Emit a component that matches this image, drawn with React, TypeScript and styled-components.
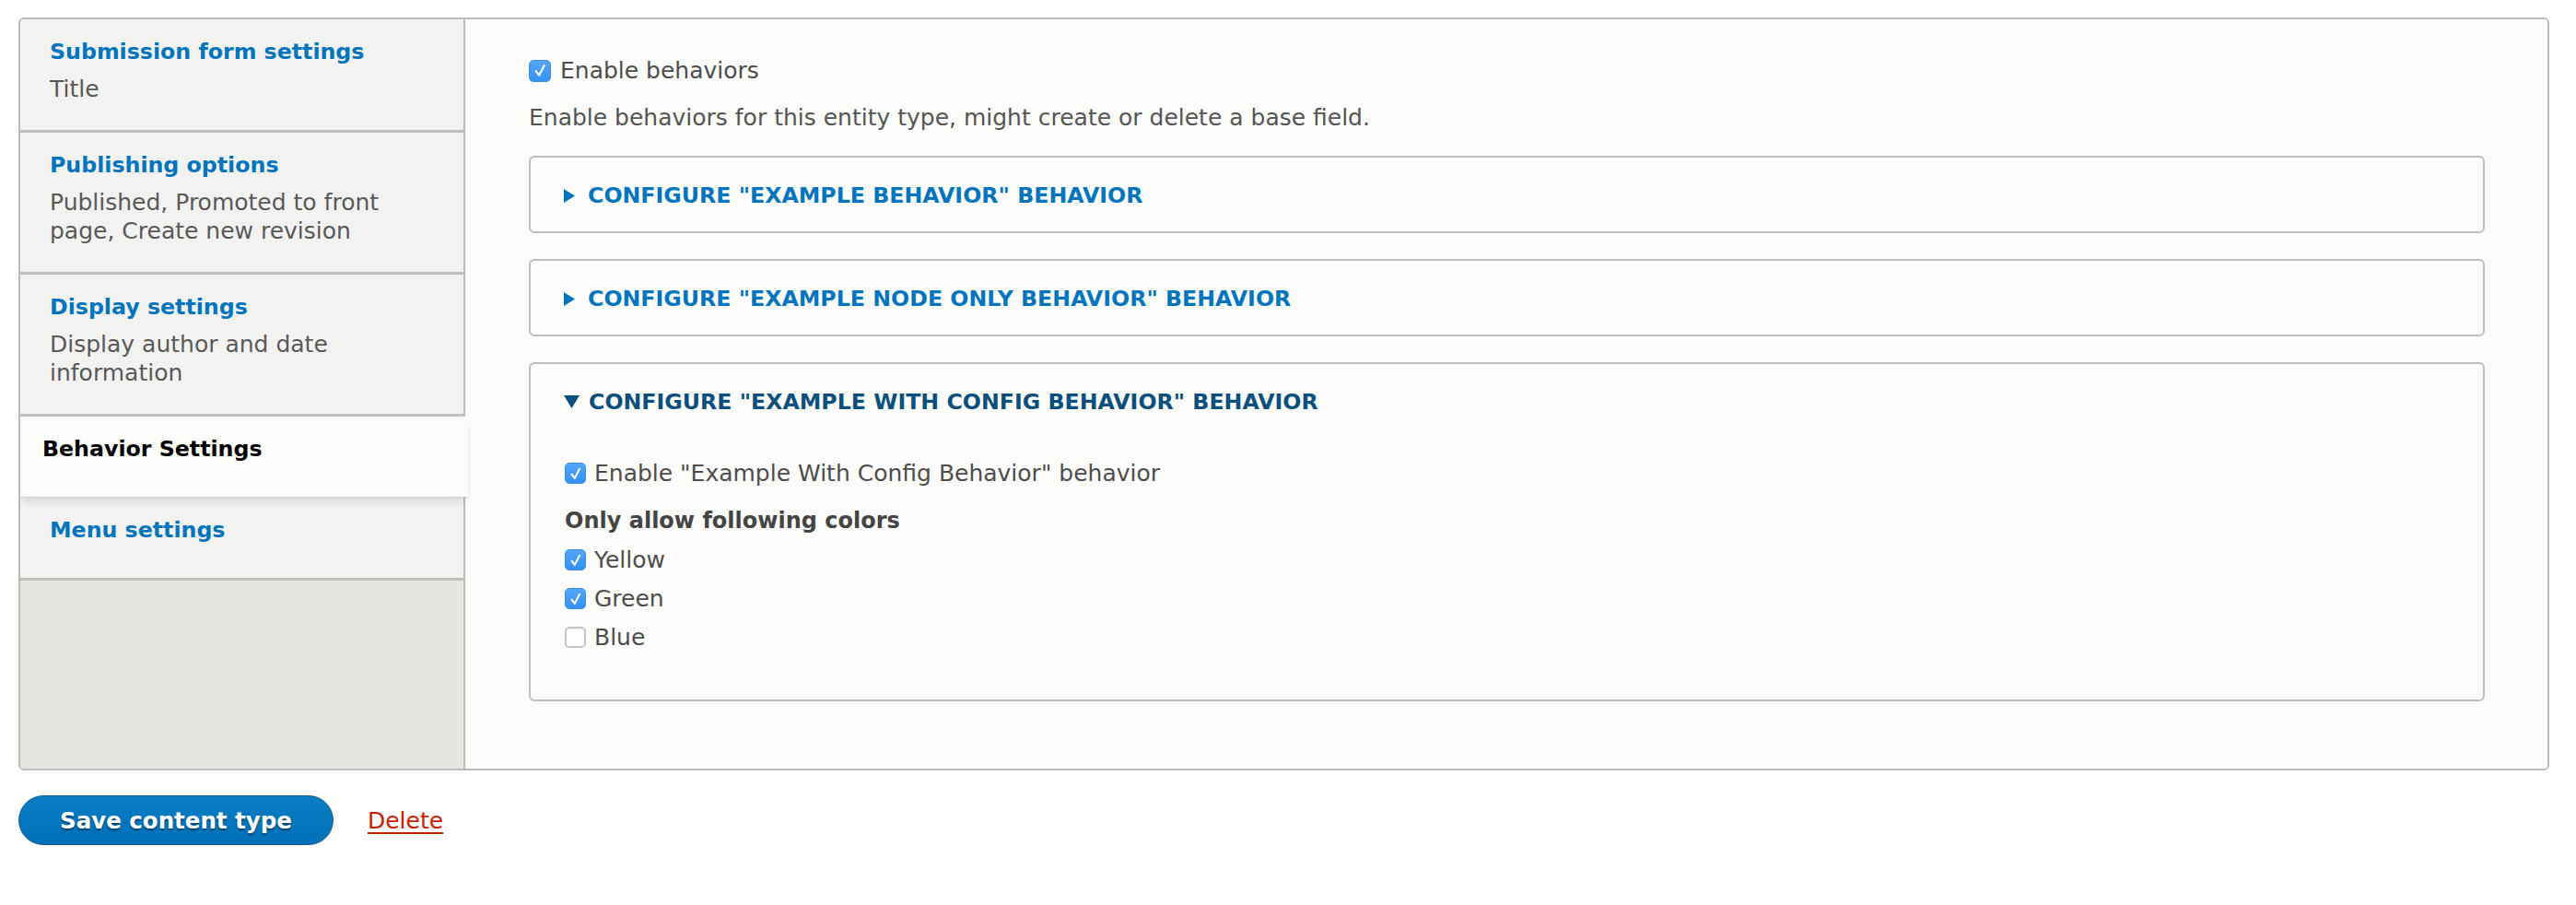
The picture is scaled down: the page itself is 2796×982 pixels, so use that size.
import React, { useState } from 'react';
import styled, { createGlobalStyle } from 'styled-components';

const GlobalStyle = createGlobalStyle`
  * {
    box-sizing: border-box;
  }

  body {
    margin: 0;
    background: #ffffff;
    font-family: "DejaVu Sans", "Lucida Grande", sans-serif;
    color: #333333;
  }
`;

const Page = styled.div`
  padding: 19px 29px 40px 20px;
`;

const VerticalTabs = styled.div`
  display: flex;
  border: 2px solid #bbbbb8;
  border-radius: 6px;
  overflow: hidden;
`;

const TabMenu = styled.ul`
  flex: 0 0 483px;
  margin: 0;
  padding: 0;
  list-style: none;
  background: #e6e5e1;
  border-right: 2px solid #bbbbb8;
`;

const TabItem = styled.li<{ $selected?: boolean; $hasSummary?: boolean }>`
  position: relative;
  padding: 19px 20px ${(p) => (p.$hasSummary ? 29 : 36)}px ${(p) => (p.$selected ? 24 : 32)}px;
  background: ${(p) => (p.$selected ? '#fcfcfa' : '#f2f2f0')};
  border-bottom: ${(p) => (p.$selected ? '1px solid #cfcfcc' : '3px solid #bfbfbc')};
  margin-right: ${(p) => (p.$selected ? '-5px' : '0')};
  z-index: ${(p) => (p.$selected ? 1 : 0)};
  box-shadow: ${(p) => (p.$selected ? '0 6px 10px -3px rgba(0, 0, 0, 0.14)' : 'none')};
  cursor: pointer;
`;

const TabTitle = styled.div<{ $selected?: boolean }>`
  font-size: 23.7px;
  line-height: 32px;
  font-weight: bold;
  color: ${(p) => (p.$selected ? '#000000' : '#0074bd')};
`;

const TabSummary = styled.div`
  margin-top: 9px;
  font-size: 25px;
  line-height: 31px;
  color: #595959;
`;

const TabPane = styled.div`
  flex: 1;
  background: #fcfcfa;
  padding: 40px 68px 73px 69px;
`;

const CheckRow = styled.label<{ $spaced?: boolean }>`
  display: flex;
  align-items: center;
  height: 31px;
  margin-top: ${(p) => (p.$spaced ? '11px' : '0')};
  cursor: pointer;
`;

const CheckBox = styled.span<{ $checked: boolean; $size: number }>`
  display: inline-flex;
  align-items: center;
  justify-content: center;
  flex: 0 0 auto;
  width: ${(p) => p.$size}px;
  height: ${(p) => p.$size}px;
  border-radius: 5px;
  background: ${(p) => (p.$checked ? 'linear-gradient(#55a6f8, #3391f4)' : '#ffffff')};
  border: ${(p) => (p.$checked ? '1px solid #3a8fe8' : '2px solid #c4c4c4')};
  box-shadow: ${(p) => (p.$checked ? 'none' : 'inset 0 1px 1px rgba(0,0,0,0.06)')};
`;

const CheckLabel = styled.span<{ $gap: number }>`
  margin-left: ${(p) => p.$gap}px;
  font-size: 25px;
  line-height: 31px;
  color: #4d4d4d;
`;

const Description = styled.div`
  margin: 20px 0 26px;
  font-size: 25px;
  line-height: 31px;
  color: #555555;
`;

const Details = styled.div`
  background: #fcfcfa;
  border: 2px solid #bfbfbc;
  border-radius: 6px;

  & + & {
    margin-top: 28px;
  }
`;

const Summary = styled.div<{ $open?: boolean }>`
  display: flex;
  align-items: center;
  padding: 25px 20px 23px 36px;
  font-size: 23.7px;
  line-height: 32px;
  font-weight: bold;
  text-transform: uppercase;
  color: ${(p) => (p.$open ? '#0b4f7e' : '#0074bd')};
  cursor: pointer;
`;

const Arrow = styled.svg<{ $open?: boolean }>`
  flex: 0 0 auto;
  margin-right: ${(p) => (p.$open ? 10 : 14)}px;
  fill: currentColor;
`;

const DetailsBody = styled.div`
  padding: 23px 20px 52px 37px;
`;

const FieldLegend = styled.div`
  margin-top: 20px;
  font-size: 24px;
  line-height: 32px;
  font-weight: bold;
  color: #444444;
`;

const Actions = styled.div`
  display: flex;
  align-items: center;
  margin-top: 27px;
`;

const PrimaryButton = styled.button`
  height: 54px;
  padding: 0 44px;
  border: 1px solid #1e5c90;
  border-radius: 27px;
  background: linear-gradient(#0a7dc4, #0071b8);
  color: #ffffff;
  font-family: inherit;
  font-size: 24.5px;
  font-weight: bold;
  text-shadow: 0 2px 2px rgba(0, 0, 0, 0.45);
  cursor: pointer;
`;

const DeleteLink = styled.a`
  margin-left: 37px;
  font-size: 25px;
  color: #c72100;
  text-decoration: underline;
  text-underline-offset: 4px;
  cursor: pointer;
`;

function Check ({ checked, label, size = 23, gap = 9, spaced, onToggle }: {
  checked: boolean;
  label: string;
  size?: number;
  gap?: number;
  spaced?: boolean;
  onToggle: () => void;
}) {
  return (
    <CheckRow $spaced={spaced} onClick={onToggle}>
      <CheckBox $checked={checked} $size={size}>
        {checked && (
          <svg width={size - 5} height={size - 5} viewBox='0 0 16 16'>
            <path d='M4 8.6 L6.9 12.4 L11.6 3.4' fill='none' stroke='#ffffff' strokeWidth='1.8' strokeLinecap='round' strokeLinejoin='round' />
          </svg>
        )}
      </CheckBox>
      <CheckLabel $gap={gap}>{label}</CheckLabel>
    </CheckRow>
  );
}

function Toggle ({ open }: { open: boolean }) {
  return open
    ? (
      <Arrow $open width='17' height='14' viewBox='0 0 17 14'>
        <polygon points='0,0 17,0 8.5,14' />
      </Arrow>
    )
    : (
      <Arrow width='12' height='15' viewBox='0 0 12 15'>
        <polygon points='0,0 12,7.5 0,15' />
      </Arrow>
    );
}

const tabs = [
  { title: 'Submission form settings', summary: ['Title'] },
  { title: 'Publishing options', summary: ['Published, Promoted to front', 'page, Create new revision'] },
  { title: 'Display settings', summary: ['Display author and date', 'information'] },
  { title: 'Behavior Settings', summary: [] },
  { title: 'Menu settings', summary: [] }
];

export default function App (): React.ReactElement {
  const [enabled, setEnabled] = useState(true);
  const [withConfig, setWithConfig] = useState(true);
  const [colors, setColors] = useState<Record<string, boolean>>({ Yellow: true, Green: true, Blue: false });

  return (
    <Page>
      <GlobalStyle />
      <VerticalTabs>
        <TabMenu>
          {tabs.map((tab) => {
            const selected = tab.title === 'Behavior Settings';

            return (
              <TabItem key={tab.title} $selected={selected} $hasSummary={tab.summary.length > 0}>
                <TabTitle $selected={selected}>{tab.title}</TabTitle>
                {tab.summary.length > 0 && (
                  <TabSummary>
                    {tab.summary.map((line) => <div key={line}>{line}</div>)}
                  </TabSummary>
                )}
              </TabItem>
            );
          })}
        </TabMenu>
        <TabPane>
          <Check checked={enabled} label='Enable behaviors' size={24} gap={10} onToggle={() => setEnabled(!enabled)} />
          <Description>Enable behaviors for this entity type, might create or delete a base field.</Description>

          <Details>
            <Summary>
              <Toggle open={false} />
              Configure "Example Behavior" behavior
            </Summary>
          </Details>
          <Details>
            <Summary>
              <Toggle open={false} />
              Configure "Example Node Only Behavior" behavior
            </Summary>
          </Details>
          <Details>
            <Summary $open>
              <Toggle open />
              Configure "Example With Config Behavior" behavior
            </Summary>
            <DetailsBody>
              <Check
                checked={withConfig}
                label='Enable "Example With Config Behavior" behavior'
                onToggle={() => setWithConfig(!withConfig)}
              />
              <FieldLegend>Only allow following colors</FieldLegend>
              {Object.keys(colors).map((name) => (
                <Check
                  key={name}
                  spaced
                  checked={colors[name]}
                  label={name}
                  onToggle={() => setColors({ ...colors, [name]: !colors[name] })}
                />
              ))}
            </DetailsBody>
          </Details>
        </TabPane>
      </VerticalTabs>
      <Actions>
        <PrimaryButton>Save content type</PrimaryButton>
        <DeleteLink>Delete</DeleteLink>
      </Actions>
    </Page>
  );
}
